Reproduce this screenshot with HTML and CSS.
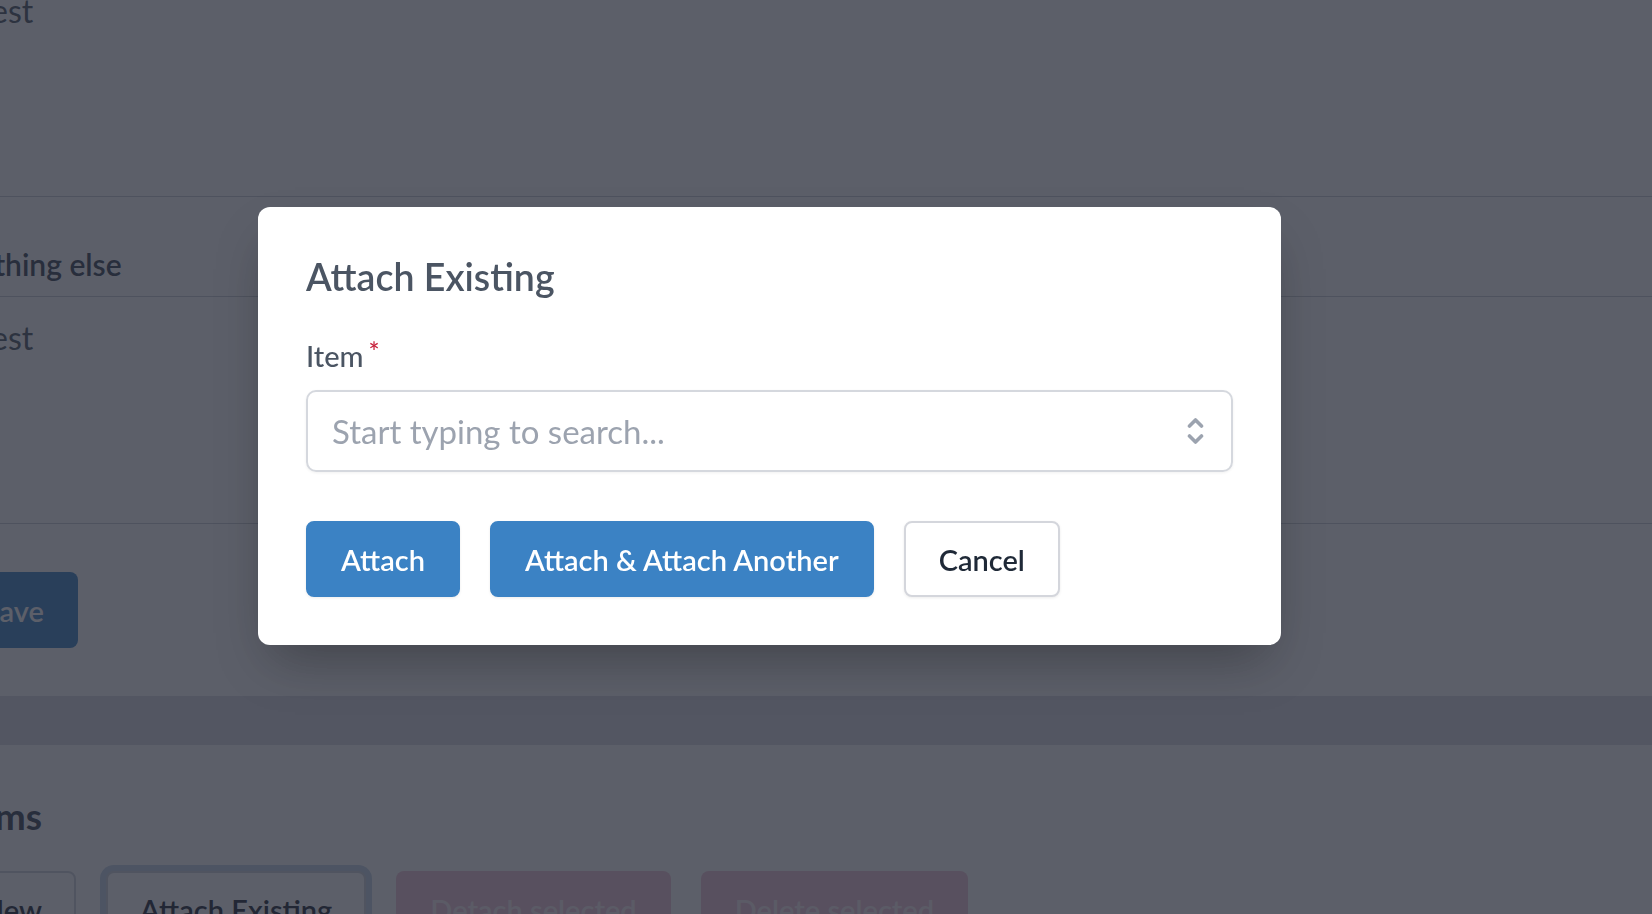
FILE: index.html
```html
<!DOCTYPE html>
<html lang="en">
<head>
<meta charset="utf-8">
<title>Attach Existing</title>
<link rel="stylesheet" href="styles.css">
</head>
<body>
<div class="page">
  <section class="card card-top">
    <div class="row row-a"><span class="cell-text t-test">Test</span></div>
    <div class="row row-b"><span class="cell-head">Something else</span></div>
    <div class="row row-c"><span class="cell-text t-test">Test</span></div>
    <div class="row row-d"><button class="bg-btn bg-primary save">Save</button></div>
  </section>
  <section class="card card-items">
    <h2 class="items-title">Items</h2>
    <div class="bg-actions">
      <button class="bg-btn bg-outline new">New</button>
      <button class="bg-btn bg-outline bg-focus">Attach Existing</button>
      <button class="bg-btn bg-danger">Detach selected</button>
      <button class="bg-btn bg-danger">Delete selected</button>
    </div>
  </section>
</div>

<div class="overlay">
  <div class="modal" role="dialog" aria-labelledby="modal-title">
    <h2 class="modal-title" id="modal-title">Attach Existing</h2>
    <div class="field">
      <label class="field-label">Item<span class="req">*</span></label>
      <div class="select">
        <span class="placeholder">Start typing to search...</span>
        <svg class="chevrons" width="17" height="30" viewBox="0 0 17 30" fill="none" stroke="currentColor" stroke-width="3.6" stroke-linecap="round" stroke-linejoin="round" aria-hidden="true">
          <path d="M2.5 10 L8.5 4 L14.5 10"/>
          <path d="M2.5 20 L8.5 26 L14.5 20"/>
        </svg>
      </div>
    </div>
    <div class="modal-actions">
      <button class="btn btn-primary">Attach</button>
      <button class="btn btn-primary">Attach &amp; Attach Another</button>
      <button class="btn btn-secondary">Cancel</button>
    </div>
  </div>
</div>
</body>
</html>
```
FILE: styles.css
```css
html, body {
  margin: 0;
  height: 100%;
  overflow: hidden;
}

body {
  font-family: Lato, "Open Sans", "Liberation Sans", sans-serif;
  background: #dadde2;
  color: #374151;
}

button {
  font-family: inherit;
}

/* ---------- background page ---------- */
.page {
  margin-top: -41px;
}

.card {
  background: #ffffff;
}

.row {
  box-sizing: border-box;
  border-bottom: 1px solid #c9cdd3;
}

.row-a {
  height: 238px;
  padding-top: 32px;
}

.row-b {
  height: 100px;
  padding-top: 49px;
}

.row-c {
  height: 227px;
  padding-top: 21px;
}

.row-d {
  height: 172px;
  padding-top: 48px;
  border-bottom: none;
}

.cell-text {
  display: inline-block;
  font-size: 32px;
  line-height: 40px;
  color: #4b5563;
}

.t-test {
  margin-left: -24px;
}

.cell-head {
  display: inline-block;
  margin-left: -80px;
  font-size: 30px;
  line-height: 36px;
  font-weight: 600;
  color: #374151;
}

.card-items {
  margin-top: 49px;
  padding-top: 49px;
  height: 400px;
}

.items-title {
  margin: 0 0 0 -49px;
  font-size: 37px;
  line-height: 44px;
  font-weight: 700;
  color: #374151;
}

.bg-actions {
  display: flex;
  gap: 30px;
  margin-top: 33px;
}

.bg-btn {
  box-sizing: border-box;
  height: 76px;
  padding: 0 32px;
  font-size: 29px;
  font-weight: 600;
  border-radius: 8px;
  border: 2px solid transparent;
  white-space: nowrap;
}

.bg-primary {
  background: #3b82c4;
  color: #ffffff;
}

.save {
  margin-left: -50px;
}

.bg-outline {
  background: #ffffff;
  border-color: #d1d5db;
  color: #1f2937;
}

.new {
  margin-left: -52px;
}

.bg-focus {
  box-shadow: 0 0 0 6px #c3d4e6;
}

.bg-danger {
  background: #f0c4d6;
  color: rgba(255, 255, 255, 0.75);
}

/* ---------- overlay + modal ---------- */
.overlay {
  position: fixed;
  inset: 0;
  background: rgba(35, 39, 52, 0.74);
}

.modal {
  position: absolute;
  left: 258px;
  top: 207px;
  width: 1023px;
  box-sizing: border-box;
  padding: 48px;
  background: #ffffff;
  border-radius: 12px;
  box-shadow: 0 25px 50px -12px rgba(0, 0, 0, 0.3);
}

.modal-title {
  margin: 0;
  font-size: 37.5px;
  line-height: 44px;
  font-weight: 600;
  color: #4b5563;
}

.field {
  margin-top: 35px;
}

.field-label {
  display: block;
  font-size: 29px;
  line-height: 36px;
  font-weight: 500;
  color: #4b5563;
}

.req {
  margin-left: 5px;
  font-size: 26px;
  vertical-align: 5px;
  color: #c8233d;
}

.select {
  margin-top: 16px;
  height: 82px;
  box-sizing: border-box;
  display: flex;
  align-items: center;
  justify-content: space-between;
  padding: 0 27px 0 24px;
  border: 2px solid #d5d8de;
  border-radius: 10px;
  box-shadow: 0 1px 3px rgba(0, 0, 0, 0.06);
}

.placeholder {
  font-size: 33px;
  color: #9ca3af;
}

.chevrons {
  color: #9ca3af;
  display: block;
}

.modal-actions {
  display: flex;
  gap: 30px;
  margin-top: 49px;
}

.btn {
  box-sizing: border-box;
  height: 76px;
  padding: 0 33px;
  font-size: 29px;
  font-weight: 600;
  border-radius: 8px;
  border: 2px solid transparent;
  white-space: nowrap;
  box-shadow: 0 1px 3px rgba(0, 0, 0, 0.08);
}

.btn-primary {
  background: #3b82c4;
  border-color: #3b82c4;
  color: #ffffff;
}

.btn-secondary {
  background: #ffffff;
  border-color: #d4d6dc;
  color: #1f2937;
}
```
